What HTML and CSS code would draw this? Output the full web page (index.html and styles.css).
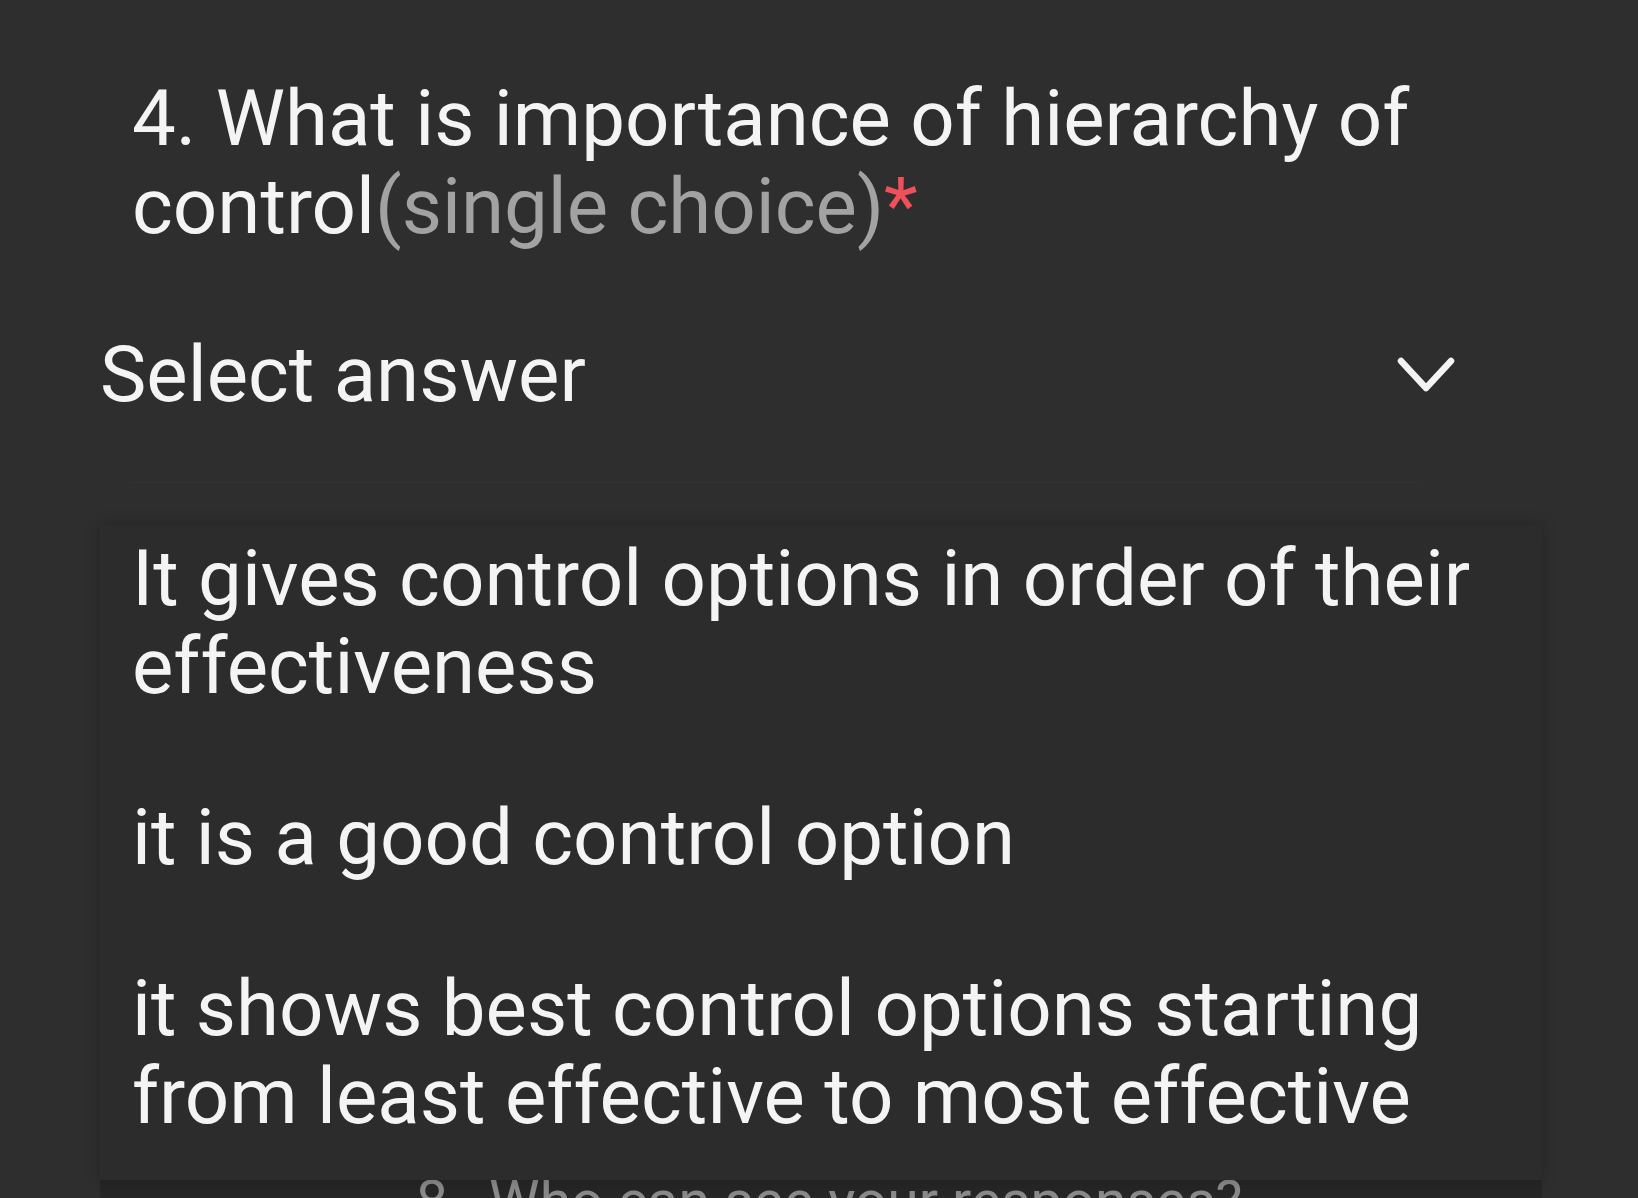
FILE: index.html
```html
<!DOCTYPE html>
<html lang="en">
<head>
<meta charset="utf-8">
<title>Question 4</title>
<link rel="stylesheet" href="styles.css">
</head>
<body>
<div class="page">
  <div class="question">4. What is importance of hierarchy of control<span class="hint">(single choice)</span><span class="req">*</span></div>
  <div class="select">
    <span class="select-label">Select answer</span>
    <svg class="chevron" width="58" height="36" viewBox="0 0 58 36"><polyline points="4,4 29,31 54,4" fill="none" stroke="#f4f4f4" stroke-width="6.5" stroke-linecap="round" stroke-linejoin="round"/></svg>
  </div>
  <div class="divider"></div>
  <div class="panel">
    <div class="option">It gives control options in order of their effectiveness</div>
    <div class="option">it is a good control option</div>
    <div class="option">it shows best control options starting from least effective to most effective</div>
  </div>
  <div class="next"><span class="num">8.</span>Who can see your responses?</div>
</div>
</body>
</html>
```
FILE: styles.css
```css
html, body {
  margin: 0;
  padding: 0;
  background: #2e2e2e;
}
.page {
  width: 1638px;
  height: 1198px;
  overflow: hidden;
  background: #2e2e2e;
  font-family: Roboto, "Noto Sans", sans-serif;
  color: #f4f4f4;
  font-size: 78px;
  line-height: 88px;
}
.question {
  padding: 75px 160px 0 132px;
}
.hint {
  color: #a2a2a2;
}
.req {
  color: #f0505a;
}
.select {
  margin-top: 80px;
  display: flex;
  align-items: center;
  justify-content: space-between;
  padding: 0 183px 0 100px;
  height: 88px;
}
.chevron {
  display: block;
}
.divider {
  margin: 63px 0 0 130px;
  width: 1290px;
  height: 1px;
  background: #323232;
}
.panel {
  margin: 42px 96px 0 100px;
  padding: 10px 60px 39px 32px;
  background: #2c2c2c;
  box-shadow: 0 0 14px rgba(0, 0, 0, 0.22);
  display: flex;
  flex-direction: column;
  gap: 83px;
  position: relative;
}
.next {
  margin: 0 96px 0 100px;
  background: #262626;
  color: #8a8a8a;
  font-size: 57px;
  line-height: 44px;
  padding-left: 316px;
  height: 60px;
  white-space: nowrap;
}
.num {
  margin-right: 26px;
}
```
